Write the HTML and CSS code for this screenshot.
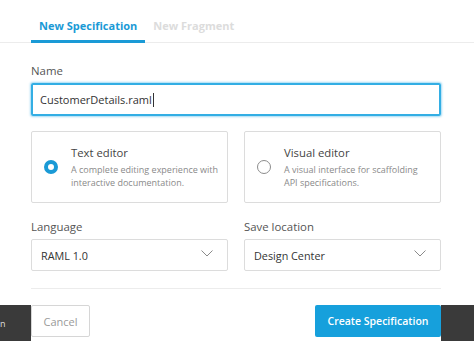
FILE: index.html
```html
<!DOCTYPE html>
<html>
<head>
<meta charset="utf-8">
<link rel="stylesheet" href="styles.css">
</head>
<body>
<div class="tabs">
  <div class="tab active">New Specification</div>
  <div class="tab">New Fragment</div>
</div>
<div class="content">
  <div class="label name-label">Name</div>
  <div class="input">CustomerDetails.raml<span class="caret"></span></div>
  <div class="cards">
    <div class="card">
      <span class="radio checked"></span>
      <div class="card-text">
        <div class="card-title">Text editor</div>
        <div class="card-desc">A complete editing experience with interactive documentation.</div>
      </div>
    </div>
    <div class="card">
      <span class="radio"></span>
      <div class="card-text">
        <div class="card-title">Visual editor</div>
        <div class="card-desc">A visual interface for scaffolding API specifications.</div>
      </div>
    </div>
  </div>
  <div class="selects">
    <div class="field">
      <div class="label">Language</div>
      <div class="select"><span>RAML 1.0</span>
        <svg class="chev" width="12" height="7" viewBox="0 0 12 7"><path d="M0.5 0.5 L6 6 L11.5 0.5" fill="none" stroke="#8a8a8a" stroke-width="1"/></svg>
      </div>
    </div>
    <div class="field">
      <div class="label">Save location</div>
      <div class="select"><span>Design Center</span>
        <svg class="chev" width="12" height="7" viewBox="0 0 12 7"><path d="M0.5 0.5 L6 6 L11.5 0.5" fill="none" stroke="#8a8a8a" stroke-width="1"/></svg>
      </div>
    </div>
  </div>
  <div class="divider"></div>
</div>
<div class="footer">
  <div class="dark left"><span class="cut">n</span></div>
  <button class="btn cancel">Cancel</button>
  <div class="spacer"></div>
  <button class="btn primary">Create Specification</button>
  <div class="dark right"></div>
</div>
</body>
</html>
```
FILE: styles.css
```css
html, body {
  margin: 0;
  padding: 0;
  background: #ffffff;
  font-family: "Open Sans", "Liberation Sans", sans-serif;
  overflow: hidden;
}
.tabs {
  display: flex;
  padding-left: 31px;
  border-bottom: 1px solid #ececec;
  height: 43px;
  box-sizing: border-box;
}
.tab {
  padding: 18px 8px 0;
  font-size: 11px;
  font-weight: 700;
  line-height: 16px;
  color: #dcdcdc;
  box-sizing: border-box;
  height: 43px;
}
.tab.active {
  color: #1a9ad6;
  border-bottom: 3px solid #1a9ad6;
}
.content {
  padding: 0 33px 0 31px;
}
.label {
  font-size: 11.4px;
  color: #555;
  line-height: 18px;
}
.name-label {
  margin-top: 19px;
}
.input {
  margin-top: 3px;
  height: 33px;
  box-sizing: border-box;
  border: 2px solid #33aee4;
  box-shadow: 0 0 2px 1px rgba(51, 174, 228, 0.45);
  border-radius: 2px;
  padding: 0 7px;
  font-size: 11px;
  color: #333;
  display: flex;
  align-items: center;
}
.caret {
  display: inline-block;
  width: 1px;
  height: 14px;
  background: #333;
  margin-left: 1px;
}
.cards {
  display: grid;
  grid-template-columns: 1fr 1fr;
  gap: 16px;
  margin-top: 15px;
}
.card {
  height: 72px;
  box-sizing: border-box;
  border: 1px solid #dcdcdc;
  border-radius: 2px;
  display: flex;
  align-items: center;
  padding-left: 12px;
}
.radio {
  width: 14px;
  height: 14px;
  box-sizing: border-box;
  border-radius: 50%;
  border: 1px solid #8c8c8c;
  flex: none;
  margin-right: 13px;
}
.radio.checked {
  border: 4.5px solid #1a9ad6;
  background: #fff;
}
.card-title {
  font-size: 11.3px;
  color: #444;
  line-height: 16px;
}
.card-desc {
  font-size: 9px;
  color: #8a8a8a;
  line-height: 13px;
  margin-top: 2px;
  width: 148px;
}
.selects {
  display: grid;
  grid-template-columns: 1fr 1fr;
  gap: 16px;
  margin-top: 15px;
}
.select {
  margin-top: 3px;
  height: 32px;
  box-sizing: border-box;
  border: 1px solid #dcdcdc;
  border-radius: 2px;
  display: flex;
  align-items: center;
  justify-content: space-between;
  padding: 0 14px 0 9px;
  font-size: 10.8px;
  color: #333;
}
.chev {
  display: block;
  margin-top: -4px;
}
.divider {
  height: 1px;
  background: #ececec;
  margin-top: 17px;
}
.footer {
  display: flex;
  margin-top: 16px;
  height: 37px;
}
.dark {
  background: #3a3a3a;
  height: 37px;
}
.dark.left {
  width: 31px;
  overflow: hidden;
}
.cut {
  display: block;
  margin-top: 13px;
  font-size: 9px;
  color: #ddd;
  line-height: 11px;
}
.dark.right {
  width: 33px;
}
.spacer {
  flex: 1;
}
.btn {
  height: 32px;
  box-sizing: border-box;
  font-family: "Open Sans", "Liberation Sans", sans-serif;
  border-radius: 2px;
  white-space: nowrap;
  padding: 0;
  cursor: pointer;
}
.cancel {
  width: 59px;
  background: #fff;
  border: 1px solid #d6d6d6;
  color: #9a9a9a;
  font-size: 11px;
}
.primary {
  width: 126px;
  background: #16a0dc;
  border: none;
  color: #fff;
  font-weight: 600;
  font-size: 10.5px;
}
```
